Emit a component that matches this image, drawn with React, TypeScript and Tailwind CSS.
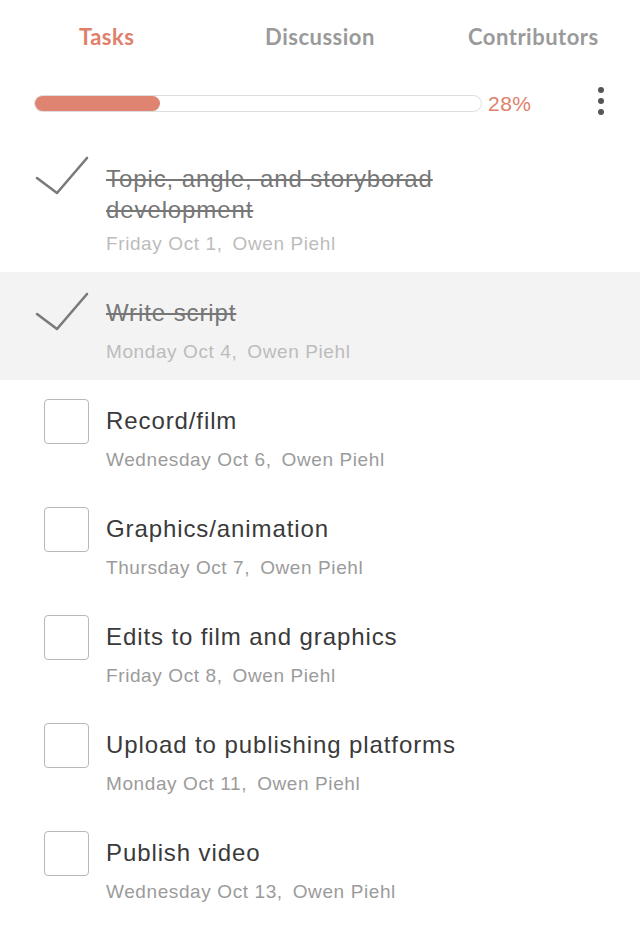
const tabs = ["Tasks", "Discussion", "Contributors"];

type Task = { title: string; date: string; done?: boolean; active?: boolean };

const tasks: Task[] = [
  { title: "Topic, angle, and storyborad development", date: "Friday Oct 1,", done: true },
  { title: "Write script", date: "Monday Oct 4,", done: true, active: true },
  { title: "Record/film", date: "Wednesday Oct 6," },
  { title: "Graphics/animation", date: "Thursday Oct 7," },
  { title: "Edits to film and graphics", date: "Friday Oct 8," },
  { title: "Upload to publishing platforms", date: "Monday Oct 11," },
  { title: "Publish video", date: "Wednesday Oct 13," },
];

function Check({ first }: { first: boolean }) {
  return (
    <svg width="54" height="40" viewBox="0 0 54 40" className={`ml-[35px] ${first ? "mt-[23px]" : "mt-[20px]"}`}>
      <path d="M2 22 L22 37 L52 2" fill="none" stroke="#7a7a7a" strokeWidth="2.6" strokeLinecap="round" strokeLinejoin="round" />
    </svg>
  );
}

function TaskRow({ task, first }: { task: Task; first: boolean }) {
  return (
    <div className={`flex pb-[16px] ${first ? "pt-[30px]" : "pt-[25px]"} ${task.active ? "bg-[#f3f3f3]" : ""}`}>
      <div className={`w-[106px] shrink-0 ${first ? "-mt-[30px]" : "-mt-[25px]"}`}>
        {task.done ? (
          <Check first={first} />
        ) : (
          <div className="ml-[44px] mt-[19px] w-[45px] h-[45px] rounded-[4px] border-[1.5px] border-[#b8b8b8] bg-white" />
        )}
      </div>
      <div className="w-[380px]">
        <div
          className={`text-[24px] leading-[31px] tracking-[0.9px] ${
            task.done ? "text-[#777] line-through decoration-[1.5px]" : "text-[#3a3a3a]"
          }`}
        >
          {task.title}
        </div>
        <div
          className={`${first ? "mt-[7px]" : "mt-[12px]"} text-[19px] leading-[24px] tracking-[0.6px] ${
            task.done ? "text-[#bcbcbc]" : "text-[#9b9b9b]"
          }`}
        >
          {task.date}
          <span className="ml-[10px]">Owen Piehl</span>
        </div>
      </div>
    </div>
  );
}

export default function App() {
  return (
    <div className="w-[640px] h-[936px] bg-white overflow-hidden" style={{ fontFamily: '"Liberation Sans", Arial, sans-serif' }}>
      <div className="grid grid-cols-3 h-[72px] items-center" style={{ fontFamily: "Lato, sans-serif" }}>
        {tabs.map((t, i) => (
          <div
            key={t}
            className={`text-center text-[22px] tracking-[0.5px] font-bold ${i === 0 ? "text-[#e0806a]" : "text-[#9a9a9a]"}`}
          >
            {t}
          </div>
        ))}
      </div>
      <div className="h-[61px] flex items-start pt-[23px]">
        <div className="ml-[34px] w-[448px] h-[17px] rounded-full border border-[#dedede] bg-white">
          <div className="w-[125px] h-full rounded-full bg-[#de8470]" />
        </div>
        <div className="ml-[6px] text-[21px] leading-[17px] tracking-[0.5px] text-[#e0806a]">28%</div>
        <div className="ml-auto mr-[36px] -mt-[8px] flex flex-col gap-[5px]">
          <span className="w-[6px] h-[6px] rounded-full bg-[#555]" />
          <span className="w-[6px] h-[6px] rounded-full bg-[#555]" />
          <span className="w-[6px] h-[6px] rounded-full bg-[#555]" />
        </div>
      </div>
      {tasks.map((t, i) => (
        <TaskRow key={t.title} task={t} first={i === 0} />
      ))}
    </div>
  );
}
